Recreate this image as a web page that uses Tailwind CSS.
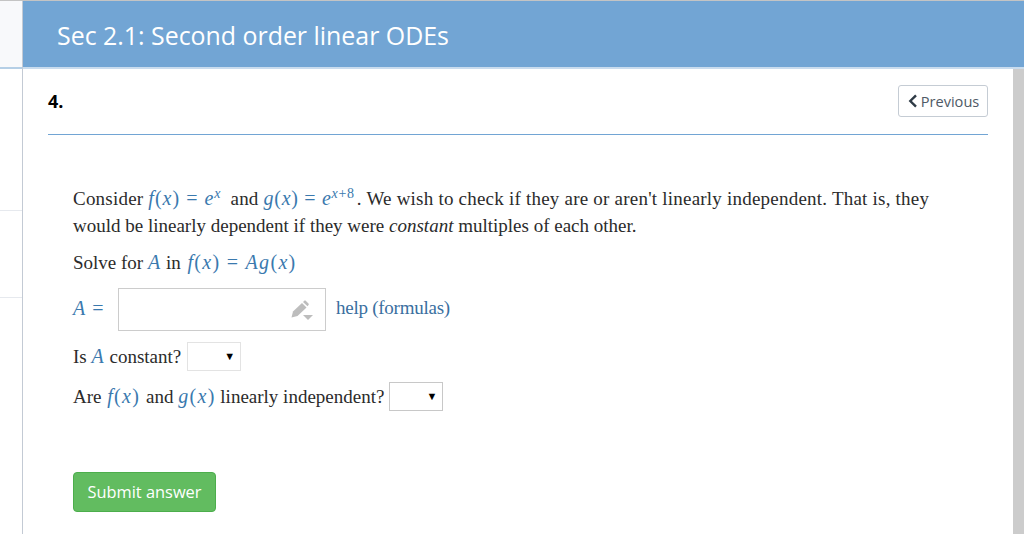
<!DOCTYPE html>
<html lang="en">
  <head>
    <meta charset="UTF-8" />
    <script src="https://cdn.jsdelivr.net/npm/@tailwindcss/browser@4"></script>
    <title>Sec 2.1: Second order linear ODEs</title>
  </head>
  <body class="h-[534px] w-[1024px] overflow-hidden bg-white">
    <div class="flex h-[534px] flex-col border-t border-[#c4c4c4]">
      <!-- header -->
      <div class="flex h-[68px] shrink-0">
        <div class="w-[22px] border-b-2 border-[#b5cfe6] bg-[#f8f9fb]"></div>
        <div class="w-px bg-[#c3cad4]"></div>
        <div class="flex flex-1 items-center border-b-2 border-[#c9dcee] bg-[#72a5d4] pt-[4px] pl-[34px] font-['Open_Sans',sans-serif] text-[24.9px] text-white">
          Sec 2.1: Second order linear ODEs
        </div>
      </div>

      <div class="flex flex-1">
        <!-- sidebar -->
        <div class="flex w-[23px] shrink-0 flex-col border-r border-[#c3cad4]">
          <div class="h-[142px] border-b border-[#e6e9ee]"></div>
          <div class="h-[87px] border-b border-[#e6e9ee]"></div>
        </div>

        <!-- question -->
        <div class="w-[990px] px-[25px] pt-[16px]">
          <div class="flex h-[50px] items-start justify-between border-b border-[#72a5d4]">
            <h3 class="pt-[5px] font-['Open_Sans',sans-serif] text-[18px] leading-[22px] font-bold text-black">4.</h3>
            <button class="flex h-[32px] w-[90px] items-center justify-center gap-[3px] rounded-[3px] border border-[#c5ccd4] bg-white pl-[1px] font-['Open_Sans',sans-serif] text-[14.6px] text-[#4f5a66]">
              <svg width="10" height="14" viewBox="0 0 10 14"><path d="M8 1.300 2.300 7 8 12.700" fill="none" stroke="#2f3b46" stroke-width="2.400" /></svg>
              <span class="pt-[1px]">Previous</span>
            </button>
          </div>

          <div class="px-[25px] pt-[50px] font-['Liberation_Serif',serif] text-[19px] text-[#2b2b2b]">
            <p class="leading-[27px]">
              <span class="tracking-[0.22px]">Consider <span class="mr-[4px] text-[20px] tracking-[1px] text-[#3a79ae]"><i>f</i>(<i>x</i>) = <i>e<sup class="text-[14px]">x</sup></i></span> and
              <span class="mr-[2px] text-[20px] tracking-[0.7px] text-[#3a79ae]"><i>g</i>(<i>x</i>) = <i>e</i><sup class="text-[14px]"><i>x</i>+8</sup></span>. We wish to check if they are or aren't linearly independent. That is, they</span><br />
              would be linearly dependent if they were <i>constant</i> multiples of each other.
            </p>
            <p class="mt-[10px] leading-[27px]">
              Solve for <span class="text-[20px] tracking-[1px] text-[#3a79ae]"><i>A</i></span> in
              <span class="ml-[2px] text-[20px] tracking-[1.300px] text-[#3a79ae]"><i>f</i>(<i>x</i>) = <i>Ag</i>(<i>x</i>)</span>
            </p>
            <div class="mt-[12px] flex h-[43px] items-center">
              <span class="w-[45px] pb-[4px] text-[20px] tracking-[1px] text-[#3a79ae]"><i>A</i> =</span>
              <div class="relative h-[43px] w-[208px] border border-[#cccccc] bg-white">
                <svg class="absolute top-[11px] left-[172px]" width="24" height="20" viewBox="0 0 24 20">
                  <path d="M.5 17.500 2 11.500 11 3l4.500 4.500-9 8.500Z" fill="#bdbdbd" />
                  <path d="M12 2l1.300-1.300a1 1 0 0 1 1.400 0l2.800 2.800a1 1 0 0 1 0 1.400L16.500 6.200Z" fill="#bdbdbd" />
                  <path d="M12 15h10l-5 5Z" fill="#bdbdbd" />
                </svg>
              </div>
              <a class="ml-[10px] pb-[2px] text-[#3a6f9f] tracking-[-0.25px]">help (formulas)</a>
            </div>
            <div class="mt-[11px] flex h-[29px] items-center">
              <span>Is <i class="text-[20px] tracking-[1px] text-[#3a79ae]">A</i> constant?</span>
              <div class="ml-[6px] flex h-[29px] w-[54px] items-center justify-end border border-[#e3e3e3] pr-[5px] text-[11px] text-black">▼</div>
            </div>
            <div class="mt-[11px] flex h-[29px] items-center">
              <span>Are <span class="ml-[1px] mr-[1px] text-[20px] tracking-[1.300px] text-[#3a79ae]"><i>f</i>(<i>x</i>)</span> and <span class="text-[20px] tracking-[1.300px] text-[#3a79ae]"><i>g</i>(<i>x</i>)</span> linearly independent?</span>
              <div class="ml-[5px] flex h-[29px] w-[54px] items-center justify-end border border-[#c8c8c8] pr-[5px] text-[11px] text-black">▼</div>
            </div>
            <button class="mt-[61px] h-[40px] w-[143px] rounded-[4px] border border-[#4cae4c] bg-[#62bc60] font-['Open_Sans',sans-serif] text-[16.4px] text-white">
              Submit answer
            </button>
          </div>
        </div>

        <!-- scrollbar -->
        <div class="w-[11px] bg-[#cccccc]"></div>
      </div>
    </div>
  </body>
</html>
